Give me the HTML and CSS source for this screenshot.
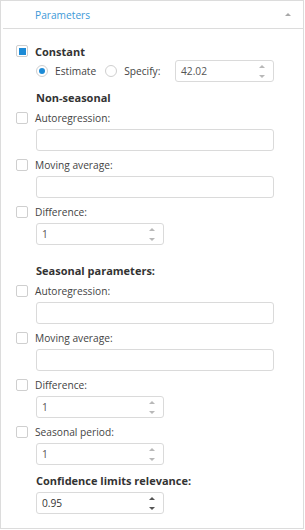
FILE: index.html
```html
<!DOCTYPE html>
<html>
<head>
<meta charset="utf-8">
<title>Parameters</title>
<link rel="stylesheet" href="styles.css">
</head>
<body>
<div class="panel">
  <div class="header">
    <span class="title">Parameters</span>
    <span class="collapse"></span>
  </div>
  <div class="content">
    <div class="row row-constant"><span class="cb checked"></span><span class="bold">Constant</span></div>
    <div class="radio-row">
      <span class="radio checked"></span><span class="rlabel">Estimate</span>
      <span class="radio second"></span><span class="rlabel">Specify:</span>
      <div class="spin spin-const disabled"><span class="val">42.02</span><span class="arrows"><i class="up"></i><i class="down"></i></span></div>
    </div>

    <div class="heading first">Non-seasonal</div>
    <div class="row"><span class="cb"></span><span>Autoregression:</span></div>
    <div class="field"></div>
    <div class="row"><span class="cb"></span><span>Moving average:</span></div>
    <div class="field"></div>
    <div class="row"><span class="cb"></span><span>Difference:</span></div>
    <div class="spin disabled"><span class="val">1</span><span class="arrows"><i class="up"></i><i class="down"></i></span></div>

    <div class="heading seasonal">Seasonal parameters:</div>
    <div class="row"><span class="cb"></span><span>Autoregression:</span></div>
    <div class="field"></div>
    <div class="row"><span class="cb"></span><span>Moving average:</span></div>
    <div class="field"></div>
    <div class="row"><span class="cb"></span><span>Difference:</span></div>
    <div class="spin disabled"><span class="val">1</span><span class="arrows"><i class="up"></i><i class="down"></i></span></div>
    <div class="row row-period"><span class="cb"></span><span>Seasonal period:</span></div>
    <div class="spin disabled"><span class="val">1</span><span class="arrows"><i class="up"></i><i class="down"></i></span></div>

    <div class="heading confidence">Confidence limits relevance:</div>
    <div class="spin"><span class="val dark">0.95</span><span class="arrows"><i class="up"></i><i class="down"></i></span></div>
  </div>
</div>
</body>
</html>
```

FILE: styles.css
```css
body {
  margin: 0;
  background: #fff;
  font-family: "Open Sans", "Noto Sans", sans-serif;
  font-size: 10.2px;
  color: #444;
}

.panel {
  width: 304px;
  height: 529px;
  box-sizing: border-box;
  border: 1px solid #dcdcdc;
}

.header {
  height: 28px;
  box-sizing: border-box;
  margin-left: 2px;
  border-bottom: 1px solid #dcdcdc;
  display: flex;
  align-items: center;
  justify-content: space-between;
  padding-left: 32px;
  padding-right: 12px;
}

.title {
  color: #3b99d8;
}

.collapse {
  width: 0;
  height: 0;
  border-left: 3px solid transparent;
  border-right: 3px solid transparent;
  border-bottom: 3px solid #a8a8a8;
}

.content {
  padding: 13px 0 0 15px;
}

.row {
  display: flex;
  align-items: center;
  gap: 7px;
  height: 22px;
}

.row-constant {
  height: 18px;
}

.row-period {
  margin-top: 2px;
}

.bold {
  font-weight: bold;
  font-size: 11px;
  color: #333;
}

.cb {
  flex: none;
  width: 12px;
  height: 12px;
  box-sizing: border-box;
  border: 1px solid #cfcfcf;
  border-radius: 2px;
  background: #fff;
  display: flex;
  align-items: center;
  justify-content: center;
}

.cb.checked::after {
  content: "";
  width: 7px;
  height: 7px;
  background: #1d8bd6;
}

.radio-row {
  display: flex;
  align-items: center;
  height: 22px;
  width: 238px;
  margin-left: 20px;
}

.radio {
  flex: none;
  width: 12px;
  height: 12px;
  box-sizing: border-box;
  border: 1px solid #cfcfcf;
  border-radius: 50%;
  display: flex;
  align-items: center;
  justify-content: center;
}

.radio.checked::after {
  content: "";
  width: 6px;
  height: 6px;
  border-radius: 50%;
  background: #1d8bd6;
}

.radio.second {
  margin-left: 9px;
}

.rlabel {
  margin-left: 7px;
}

.heading {
  font-weight: bold;
  font-size: 11px;
  color: #333;
  height: 18px;
  line-height: 18px;
  padding-left: 20px;
}

.heading.first {
  margin-top: 7px;
}

.heading.seasonal {
  margin-top: 17px;
}

.heading.confidence {
  margin-top: 4px;
  height: 23px;
  line-height: 23px;
}

.field {
  margin-left: 20px;
  width: 238px;
  height: 22px;
  box-sizing: border-box;
  border: 1px solid #dadada;
  border-radius: 3px;
  margin-bottom: 3px;
}

.spin {
  margin-left: 20px;
  margin-bottom: 3px;
  width: 128px;
  height: 22px;
  box-sizing: border-box;
  border: 1px solid #dadada;
  border-radius: 3px;
  display: flex;
  align-items: center;
  justify-content: space-between;
  padding: 0 8px 0 5px;
  color: #555;
}

.spin-const {
  margin-left: auto;
  margin-bottom: 0;
  width: 99px;
}

.val.dark {
  color: #333;
}

.arrows {
  display: flex;
  flex-direction: column;
  gap: 7px;
}

.arrows i {
  display: block;
  width: 0;
  height: 0;
  border-left: 3px solid transparent;
  border-right: 3px solid transparent;
}

.arrows .up {
  border-bottom: 3px solid #555;
}

.arrows .down {
  border-top: 3px solid #555;
}

.disabled .arrows .up {
  border-bottom-color: #b8b8b8;
}

.disabled .arrows .down {
  border-top-color: #b8b8b8;
}
```
